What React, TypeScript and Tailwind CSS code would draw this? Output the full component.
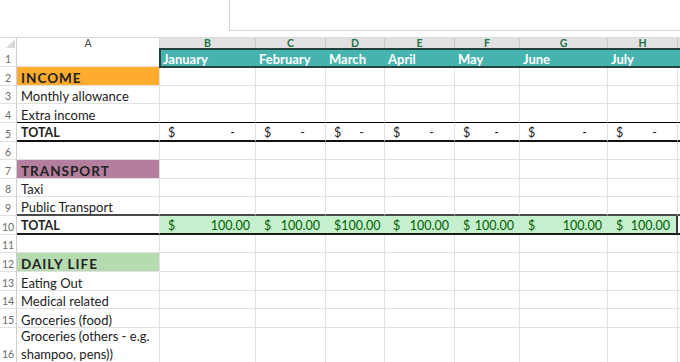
import React from "react";

const COLS = ["w-[143px]", "w-[96px]", "w-[70px]", "w-[59px]", "w-[70px]", "w-[65px]", "w-[88px]", "w-[70px]"];
const MONTHS = ["January", "February", "March", "April", "May", "June", "July"];
const LETTERS = ["B", "C", "D", "E", "F", "G", "H"];

type RowDef = {
  n: number;
  a?: string;
  bold?: boolean;
  section?: boolean;
  aBg?: string;
  kind?: "dash" | "money";
  bottom?: string;
};

const rows: RowDef[] = [
  { n: 2, a: "INCOME", section: true, aBg: "bg-[#ffab2e]" },
  { n: 3, a: "Monthly allowance" },
  { n: 4, a: "Extra income", bottom: "border-b border-b-black" },
  { n: 5, a: "TOTAL", bold: true, kind: "dash", bottom: "border-b-2 border-b-[#111]" },
  { n: 6 },
  { n: 7, a: "TRANSPORT", section: true, aBg: "bg-[#b47e9e]" },
  { n: 8, a: "Taxi" },
  { n: 9, a: "Public Transport", bottom: "border-b-2 border-b-[#4a4a4a]" },
  { n: 10, a: "TOTAL", bold: true, kind: "money", bottom: "border-b-2 border-b-[#1a1a1a]" },
  { n: 11 },
  { n: 12, a: "DAILY LIFE", section: true, aBg: "bg-[#b6dbb0]" },
  { n: 13, a: "Eating Out" },
  { n: 14, a: "Medical related" },
  { n: 15, a: "Groceries (food)" },
];

const font = { fontFamily: "Lato, 'Open Sans', sans-serif" };

function RowNum({ n, tall }: { n: number; tall?: boolean }) {
  return (
    <div
      className={`w-[17px] shrink-0 flex justify-center items-end leading-[13px] border-r border-r-[#cfcfcf] border-b border-b-[#e1e1e1] text-[10.5px] text-[#6b6b6b] ${
        tall ? "pb-[3px]" : "pb-0"
      }`}
    >
      {n}
    </div>
  );
}

function ValueCell({ kind, idx, bottom }: { kind?: "dash" | "money"; idx: number; bottom?: string }) {
  const w = COLS[idx + 1];
  const base = `${w} shrink-0 flex items-end leading-[14px] border-r border-r-[#e1e1e1] ${bottom ?? "border-b border-b-[#e1e1e1]"}`;
  if (kind === "dash") {
    return (
      <div className={`${base} justify-between pl-[8px] pr-[20px] text-[12.5px] text-[#222]`}>
        <span>$</span>
        <span>-</span>
      </div>
    );
  }
  if (kind === "money") {
    return (
      <div
        className={`${w} shrink-0 flex items-end leading-[14px] justify-between pl-[8px] pr-[6px] bg-[#c6efce] text-[#006100] text-[12.5px] ${
          idx === 6 ? "border-r-2 border-r-[#3a3a3a]" : ""
        } ${bottom}`}
      >
        <span>$</span>
        <span>100.00</span>
      </div>
    );
  }
  return <div className={base} />;
}

export default function App() {
  return (
    <div className="w-[680px] h-[362px] overflow-hidden bg-white" style={font}>
      {/* top area with formula box */}
      <div className="h-[37px] flex">
        <div className="w-[229px] shrink-0" />
        <div className="flex-1 h-[31px] border-l border-b border-[#d6d6d6]" />
      </div>

      {/* column headers */}
      <div className="h-[11px] flex border-t border-t-[#dadada] text-[10.5px] leading-[10px]">
        <div className="w-[17px] shrink-0 relative border-r border-r-[#cfcfcf]">
          <svg className="absolute left-[6px] top-[1px]" width="9" height="9" viewBox="0 0 9 9">
            <polygon points="9,0 9,9 0,9" fill="#d9d9d9" />
          </svg>
        </div>
        <div className={`${COLS[0]} shrink-0 flex items-start justify-center text-[#444] border-r border-r-[#d4d4d4]`}>A</div>
        {LETTERS.map((l, i) => (
          <div
            key={l}
            className={`${COLS[i + 1]} shrink-0 flex items-start justify-center bg-[#e1e1e1] text-[#217346] font-bold border-r border-r-[#c6c6c6]`}
          >
            {l}
          </div>
        ))}
        <div className="flex-1 bg-[#e1e1e1]" />
      </div>

      {/* row 1 */}
      <div className="h-[19px] flex relative">
        <RowNum n={1} />
        <div className={`${COLS[0]} shrink-0 border-r border-r-[#e1e1e1] border-b border-b-[#e1e1e1]`} />
        {MONTHS.map((m, i) => (
          <div
            key={m}
            className={`${COLS[i + 1]} shrink-0 flex items-end pb-[1px] leading-[14px] pl-[3px] bg-[#47b3ae] text-white font-bold text-[13px]`}
          >
            {m}
          </div>
        ))}
        <div className="flex-1 bg-[#47b3ae]" />
        <div className="absolute left-[159px] right-[-4px] top-0 bottom-[-1px] border-2 border-[#24423d] pointer-events-none" />
      </div>

      {rows.map((r) => (
        <div key={r.n} className="h-[18.625px] flex">
          <RowNum n={r.n} />
          <div
            className={`${COLS[0]} shrink-0 flex items-end leading-[14px] pl-[4px] text-[#222] border-r border-r-[#e1e1e1] ${
              r.aBg ?? ""
            } ${r.section ? "font-bold text-[13.5px] tracking-[1px]" : r.bold ? "font-bold text-[12.5px]" : "text-[13px]"} ${
              r.bottom ?? "border-b border-b-[#e1e1e1]"
            }`}
          >
            {r.a}
          </div>
          {LETTERS.map((l, i) => (
            <ValueCell key={l} kind={r.kind} idx={i} bottom={r.bottom} />
          ))}
          <div className={`flex-1 ${r.bottom ?? "border-b border-b-[#e1e1e1]"}`} />
        </div>
      ))}

      {/* row 16 */}
      <div className="h-[37px] flex">
        <RowNum n={16} tall />
        <div className={`${COLS[0]} shrink-0 pl-[4px] text-[13px] leading-[18px] text-[#222] border-r border-r-[#e1e1e1]`}>
          <div className="-mt-[1px]">Groceries (others - e.g. shampoo, pens))</div>
        </div>
        {LETTERS.map((l, i) => (
          <div key={l} className={`${COLS[i + 1]} shrink-0 border-r border-r-[#e1e1e1]`} />
        ))}
      </div>
    </div>
  );
}
